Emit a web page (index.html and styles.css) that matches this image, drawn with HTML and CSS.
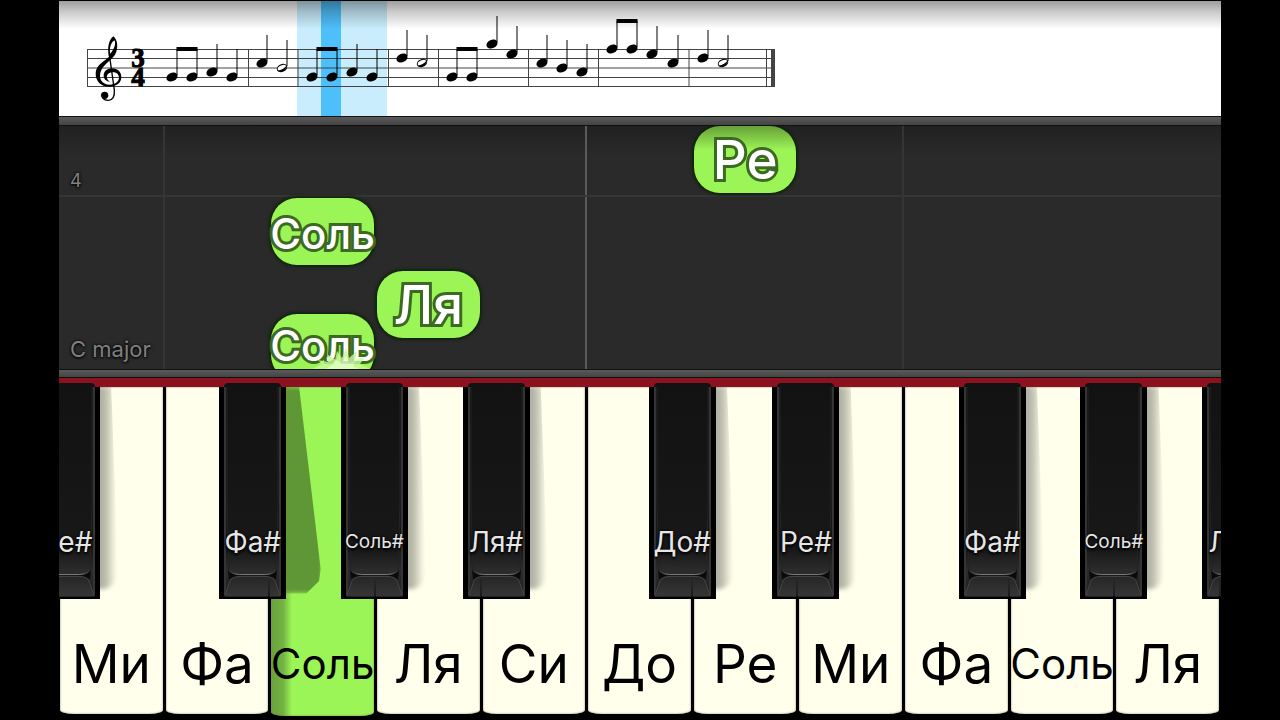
FILE: index.html
```html
<!DOCTYPE html>
<html lang="ru">
<head>
    <meta charset="UTF-8">
    <meta name="viewport" content="width=device-width, initial-scale=1.0">
    <title>Пианино</title>
    <link rel="stylesheet" href="styles.css">
</head>

<body>
    <!-- shared drawing of a black key -->
    <svg class="defs" width="0" height="0" aria-hidden="true">
        <defs>
            <linearGradient id="cap" x1="0" y1="0" x2="0" y2="1">
                <stop offset="0" stop-color="#121212"/>
                <stop offset="0.78" stop-color="#181818"/>
                <stop offset="0.88" stop-color="#2c2c2c"/>
                <stop offset="1" stop-color="#1c1c1c"/>
            </linearGradient>
            <linearGradient id="foot" x1="0" y1="0" x2="0" y2="1">
                <stop offset="0" stop-color="#262626"/>
                <stop offset="1" stop-color="#363636"/>
            </linearGradient>
            <linearGradient id="ridge" gradientUnits="userSpaceOnUse" x1="8" y1="0" x2="59" y2="0">
                <stop offset="0" stop-color="#222"/>
                <stop offset="0.3" stop-color="#7a7a7a"/>
                <stop offset="0.7" stop-color="#7a7a7a"/>
                <stop offset="1" stop-color="#222"/>
            </linearGradient>
        </defs>
        <symbol id="black-key" viewBox="0 0 67 217" preserveAspectRatio="none">
            <rect y="4" width="67" height="213" fill="#000"/>
            <path d="M5 214V4Q5 0 9 0H58Q62 0 62 4V214Z" fill="url(#cap)"/>
            <path d="M6 4V213M61 4V213" stroke="#343434" stroke-width="2"/>
            <path d="M8 4V120L10 187M59 4V120L57 187" stroke="#242424" fill="none"/>
            <path d="M9 187Q13 193 21 193H46Q54 193 58 187L57 197Q54 194 48 194H19Q13 194 10 197Z" fill="#0a0a0a"/>
            <path d="M6 214L10 201Q12 194 20 194H47Q55 194 57 201L61 214Z" fill="url(#foot)"/>
            <path d="M6 213L10 201Q12 194 20 194H47Q55 194 57 201L61 213" stroke="#444" fill="none"/>
            <path d="M10 188Q14 192 21 192H46Q53 192 57 188" stroke="url(#ridge)" stroke-width="1.2" fill="none"/>
        </symbol>
    </svg>

    <main class="piano">
        <header class="sheet">
            <svg class="score" viewBox="59 0 720 116" width="720" height="116" role="img" aria-label="Ноты">
                <defs>
                    <ellipse id="head" rx="5.8" ry="4.2" transform="rotate(-25)"/>
                    <g id="quarter">
                        <use href="#head"/>
                        <path d="M5 -2V-28" stroke="#000"/>
                    </g>
                    <g id="half">
                        <ellipse rx="5" ry="3.3" transform="rotate(-25)" fill="#fff" stroke="#000"/>
                        <path d="M-4.4 2.6Q2 1.5 4.6 -2.6Q4.5 3 -2 4Z"/>
                        <path d="M5 -2V-28" stroke="#000"/>
                    </g>
                    <g id="eighths">
                        <use href="#head"/>
                        <use href="#head" x="20"/>
                        <path d="M5 -2V-28M25 -2V-28" stroke="#000"/>
                        <rect x="4.5" y="-30" width="21" height="4"/>
                    </g>
                </defs>
                <rect x="297" width="90" height="116" fill="#c9edfd"/>
                <rect x="321" width="20" height="116" fill="#4dbffb"/>
                <path d="M87 49.5H775M87 58.5H775M87 68H775M87 77.5H775M87 86.5H775" stroke="#444"/>
                <path d="M87.5 49V87M248.5 49V87M298 49V87M388.5 49V87M438.5 49V87M528.5 49V87M598.5 49V87M689 49V87M766.5 49V87" stroke="#444"/>
                <rect x="771" y="49" width="4" height="38" fill="#444"/>
                <g transform="translate(60 0) scale(.3333)">
                    <path fill-rule="evenodd" d="M147 170C141 145 146 120 160 109C171 117 175 137 169 155C162 178 134 188 124 210C113 236 126 254 149 254C166 254 177 245 177 232C176 222 168 216 156 217C145 218 139 226 141 234C142 240 146 243 150 245C139 244 131 237 131 227C131 214 142 205 156 205C173 205 184 216 184 232C184 249 169 260 148 260C122 260 107 243 107 221C107 196 130 186 147 170ZM151 161C147 145 153 128 163 121C169 130 162 150 151 161Z"/>
                    <path d="M148 163L163 270Q165 300 145 301Q132 301 128 293" fill="none" stroke="#000" stroke-width="4"/>
                    <circle cx="134" cy="286" r="11"/>
                </g>
                <text class="meter" x="138" y="67">3</text>
                <text class="meter" x="138" y="86">4</text>
                <use href="#eighths" x="172" y="77"/>
                <use href="#quarter" x="212" y="72"/>
                <use href="#quarter" x="232" y="77"/>
                <use href="#quarter" x="262" y="63"/>
                <use href="#half" x="282" y="68"/>
                <use href="#eighths" x="312" y="77"/>
                <use href="#quarter" x="352" y="72"/>
                <use href="#quarter" x="372" y="77"/>
                <use href="#quarter" x="402" y="58"/>
                <use href="#half" x="422" y="63"/>
                <use href="#eighths" x="452" y="77"/>
                <use href="#quarter" x="492" y="44"/>
                <use href="#quarter" x="512" y="54"/>
                <use href="#quarter" x="542" y="63"/>
                <use href="#quarter" x="562" y="68"/>
                <use href="#quarter" x="582" y="72"/>
                <use href="#eighths" x="612" y="49"/>
                <use href="#quarter" x="652" y="54"/>
                <use href="#quarter" x="673" y="63"/>
                <use href="#quarter" x="703" y="58"/>
                <use href="#half" x="723" y="63"/>
            </svg>
        </header>
        <div class="rail rail-top"></div>

        <section class="roll">
            <div class="line line-fa"></div>
            <div class="line line-do"></div>
            <div class="line line-fa2"></div>
            <div class="measure"></div>
            <span class="measure-number">4</span>
            <span class="scale-name">C major</span>
            <div class="note note-re">Ре</div>
            <div class="note note-sol small">Соль</div>
            <div class="note note-la">Ля</div>
            <div class="note note-sol-now small">Соль
                <svg class="spark" viewBox="0 0 66 28" width="66" height="28" aria-hidden="true">
                    <path d="M2 28L14 22L10 18L20 20L19 12L27 18L29 9L34 16L38 6L41 16L49 9L47 18L57 15L52 22L64 28Z" fill="#c8fa98"/>
                    <path d="M16 28L26 22L26 17L33 21L38 14L41 21L48 18L45 24L53 28Z" fill="#ecffd4"/>
                </svg>
            </div>
        </section>
        <div class="rail rail-bottom"></div>

        <section class="keyboard">
            <ul class="keys">
                <li class="re-sharp">
                    <button class="white">Ми</button>
                    <button class="black"><svg><use href="#black-key"/></svg><span>Ре#</span></button>
                </li>
                <li>
                    <button class="white">Фа</button>
                </li>
                <li class="fa-sharp pressed">
                    <button class="white small">Соль</button>
                    <button class="black"><svg><use href="#black-key"/></svg><span>Фа#</span></button>
                </li>
                <li class="sol-sharp">
                    <button class="white">Ля</button>
                    <button class="black small"><svg><use href="#black-key"/></svg><span>Соль#</span></button>
                </li>
                <li class="la-sharp">
                    <button class="white">Си</button>
                    <button class="black"><svg><use href="#black-key"/></svg><span>Ля#</span></button>
                </li>
                <li>
                    <button class="white">До</button>
                </li>
                <li class="do-sharp">
                    <button class="white">Ре</button>
                    <button class="black"><svg><use href="#black-key"/></svg><span>До#</span></button>
                </li>
                <li class="re-sharp">
                    <button class="white">Ми</button>
                    <button class="black"><svg><use href="#black-key"/></svg><span>Ре#</span></button>
                </li>
                <li>
                    <button class="white">Фа</button>
                </li>
                <li class="fa-sharp">
                    <button class="white small">Соль</button>
                    <button class="black"><svg><use href="#black-key"/></svg><span>Фа#</span></button>
                </li>
                <li class="sol-sharp">
                    <button class="white">Ля</button>
                    <button class="black small"><svg><use href="#black-key"/></svg><span>Соль#</span></button>
                </li>
                <li class="la-sharp edge">
                    <button class="black"><svg><use href="#black-key"/></svg><span>Ля#</span></button>
                </li>
            </ul>
        </section>
    </main>
</body>
</html>
```
FILE: styles.css
```css
* {
    box-sizing: border-box;
}
body {
    margin: 0;
    padding: 0 59px;
    background-color: #000;
    font-family: Inter, "Liberation Sans", sans-serif;
}
button {
    margin: 0;
    padding: 0;
    border: 0;
    background: none;
    font-family: inherit;
    cursor: pointer;
}
.defs {
    position: absolute;
}
.piano {
    display: flex;
    flex-direction: column;
    height: 100vh;
    min-height: 600px;
    overflow: hidden;
}

/* sheet music */
.sheet {
    position: relative;
    height: 116px;
    flex: none;
    border-top: 1px solid #000;
    background-color: #fff;
    overflow: hidden;
}
.sheet::after {
    content: "";
    position: absolute;
    inset: 0 0 auto 0;
    height: 28px;
    background: linear-gradient(rgba(0, 0, 0, 0.38), rgba(0, 0, 0, 0.2) 40%, rgba(0, 0, 0, 0));
}
.score {
    display: block;
    margin-top: -1px;
}
.meter {
    font-family: "Liberation Serif", serif;
    font-size: 27px;
    font-weight: bold;
    text-anchor: middle;
    stroke: #000;
    stroke-width: 1px;
}

.rail {
    flex: none;
    border: solid #111;
    border-width: 1px 0;
    background: linear-gradient(#5a5a5a, #444);
}
.rail-top {
    height: 10px;
}
.rail-bottom {
    height: 9px;
}

/* falling notes */
.roll {
    position: relative;
    flex: none;
    height: 243px;
    background: linear-gradient(#212121, #2a2a2a 30px);
    overflow: hidden;
}
.line {
    position: absolute;
    top: 0;
    bottom: 0;
    width: 2px;
    margin-left: -2px;
    background-color: #353535;
}
.line-fa {
    left: calc(100% / 11);
}
.line-do {
    left: calc(500% / 11);
    background-color: #5a5a5a;
}
.line-fa2 {
    left: calc(800% / 11);
}
.measure {
    position: absolute;
    top: 69px;
    left: 0;
    right: 0;
    height: 2px;
    background-color: #353535;
}
.measure-number, .scale-name {
    position: absolute;
    left: 11px;
    color: #808080;
    text-shadow: 0 0 3px #000, 0 1px 3px #000;
}
.measure-number {
    top: 43px;
    font-size: 18px;
    line-height: 24px;
}
.scale-name {
    bottom: 6px;
    font-size: 22px;
    line-height: 28px;
}
.note {
    position: absolute;
    width: calc(100% / 11 - 3px);
    height: 67px;
    margin-left: 1px;
    border-radius: 26px;
    background-color: #9cf556;
    box-shadow: 0 0 3px 2px #10240a;
    color: #fff;
    font-size: 53px;
    font-weight: 500;
    line-height: 69px;
    text-align: center;
    white-space: nowrap;
    display: flex;
    justify-content: center;
    -webkit-text-stroke: 6px #3c6a22;
    paint-order: stroke fill;
}
.note.small {
    font-size: 42px;
    line-height: 72px;
}
.note-re {
    top: 0;
    left: calc(600% / 11);
    background-image: linear-gradient(rgba(0, 0, 0, 0.35), rgba(0, 0, 0, 0) 24px);
}
.note-sol {
    top: 72px;
    left: calc(200% / 11);
}
.note-la {
    top: 145px;
    left: calc(300% / 11);
}
.note-sol-now {
    top: 188px;
    left: calc(200% / 11);
}
.note-sol-now.small {
    line-height: 64px;
}
.spark {
    position: absolute;
    top: 28px;
    right: 0;
    opacity: 0.8;
}

/* keyboard */
.keyboard {
    flex: 1;
    display: flex;
    border-top: 9px solid #8b121e;
}
.keys {
    flex: 1;
    display: flex;
    margin: 0;
    padding: 0;
    list-style: none;
}
.keys li {
    position: relative;
    flex: 1 1 0;
    min-width: 0;
    display: flex;
    padding: 0 2px 6px 1px;
}
/* seam between two white keys, seen through the black key */
.keys li::before {
    content: "";
    position: absolute;
    z-index: 3;
    top: 57%;
    left: -2px;
    width: 2px;
    height: 7%;
    background: linear-gradient(rgba(0, 0, 0, 0), rgba(0, 0, 0, 0.6));
}
.keys .edge {
    flex: none;
    width: 0;
    padding: 0;
}
.white {
    flex: 1;
    min-width: 0;
    display: flex;
    justify-content: center;
    align-items: flex-end;
    padding-bottom: 16px;
    border-radius: 0 0 14px 14px / 0 0 4px 4px;
    background-color: #ffffec;
    box-shadow: inset 0 0 2px #77776a;
    color: #000;
    font-size: 53px;
    line-height: 68px;
    white-space: nowrap;
}
.white.small {
    font-size: 42px;
}
.pressed {
    z-index: 1;
}
.keys .pressed {
    padding-bottom: 4px;
}
.pressed .white {
    padding-bottom: 18px;
    background: linear-gradient(to right, #6aa63c 2px, #72b242 12px, #9cf556 21px);
}
.black {
    position: absolute;
    z-index: 2;
    top: -4px;
    width: 67px;
    height: 65%;
    color: #e6e6e6;
    font-size: 28px;
    line-height: 36px;
}
.black svg {
    position: absolute;
    z-index: 1;
    top: 0;
    left: 0;
    width: 100%;
    height: 100%;
}
.black span {
    position: absolute;
    z-index: 2;
    left: -10px;
    right: -10px;
    bottom: 39px;
    text-align: center;
    text-shadow: 0 0 3px #000, 0 2px 3px #000;
}
.black.small {
    font-size: 19px;
}
/* shadow that a black key throws on the white key to its right */
.black::after {
    content: "";
    position: absolute;
    top: 4px;
    bottom: 10px;
    left: calc(100% - 4px);
    width: 19px;
    border-radius: 0 0 12px 0;
    background: linear-gradient(to right, rgba(0, 0, 0, 0.36), rgba(0, 0, 0, 0.26) 50%, rgba(0, 0, 0, 0.04));
    clip-path: polygon(0 0, 80% 0, 120% 100%, 120% 110%, 0 110%);
    filter: blur(2px);
}
.pressed .black::after {
    left: calc(100% - 4px);
    width: 40px;
    bottom: 6px;
    border-radius: 0;
    background: #5f9636;
    clip-path: polygon(0 0, 42% 0, 96% 88%, 92% 94%, 60% 100%, 0 100%);
}
.pressed .black {
    filter: none;
}
.re-sharp .black {
    left: -26px;
}
.fa-sharp .black {
    left: -51px;
}
.sol-sharp .black {
    left: -35px;
}
.la-sharp .black {
    left: -19px;
}
.do-sharp .black {
    left: -44px;
}
```
